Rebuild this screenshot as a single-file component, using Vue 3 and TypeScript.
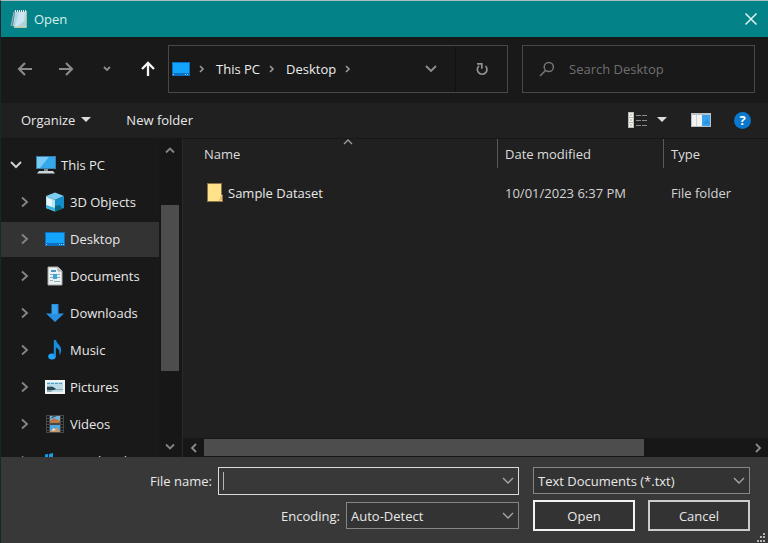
<script setup lang="ts">
import { ref } from 'vue'

interface Place {
  name: string
  icon: string
}

const places: Place[] = [
  { name: '3D Objects', icon: 'cube' },
  { name: 'Desktop', icon: 'desktop' },
  { name: 'Documents', icon: 'document' },
  { name: 'Downloads', icon: 'download' },
  { name: 'Music', icon: 'music' },
  { name: 'Pictures', icon: 'picture' },
  { name: 'Videos', icon: 'video' },
  { name: 'Local Disk (C:)', icon: 'disk' },
]

const files = [{ name: 'Sample Dataset', modified: '10/01/2023 6:37 PM', type: 'File folder' }]

const selected = ref('Desktop')
const fileName = ref('')
const search = ref('')
const fileType = ref('txt')
const encoding = ref('auto')
</script>

<template>
  <main class="dialog">
    <header class="titlebar">
      <svg class="app-icon" width="18" height="20" viewBox="0 0 18 20">
        <path d="M4 2h12v16H5L1 17z" fill="#5e8e98" />
        <path d="M5 3h11l-1 14H3z" fill="#a9d5e6" />
        <path d="M9 3h6l-1 9-6 5H5z" fill="#d8eef5" opacity=".7" />
        <path d="M16 2v16H4" fill="none" stroke="#efe3c4" stroke-width="1.3" />
        <path d="M5 2h11" stroke="#e3eef0" stroke-width="2" stroke-dasharray="1 1" />
        <path d="M4 3 1 17" stroke="#8fb5bc" />
      </svg>
      <h1>Open</h1>
      <button class="close" aria-label="Close">
        <svg width="14" height="14" viewBox="0 0 14 14"><path d="M1.5 1.5l11 11m0-11l-11 11" fill="none" stroke="#e3f1f1" stroke-width="1.5" /></svg>
      </button>
    </header>

    <nav class="navbar">
      <button class="nav-button" aria-label="Back">
        <svg width="16" height="14" viewBox="0 0 16 14"><path d="M15 7H2m6-6L2 7l6 6" fill="none" stroke="#8b8b8b" stroke-width="2.100" /></svg>
      </button>
      <button class="nav-button" aria-label="Forward">
        <svg width="16" height="14" viewBox="0 0 16 14"><path d="M1 7h13M8 1l6 6-6 6" fill="none" stroke="#8b8b8b" stroke-width="2.100" /></svg>
      </button>
      <button class="nav-button" aria-label="Recent locations">
        <svg width="8" height="6" viewBox="0 0 8 6"><path d="M1 1l3 3 3-3" fill="none" stroke="#8b8b8b" stroke-width="1.8" /></svg>
      </button>
      <button class="nav-button" aria-label="Up">
        <svg width="14" height="16" viewBox="0 0 14 16"><path d="M7 15V2M1 8l6-6 6 6" fill="none" stroke="#f4f4f4" stroke-width="2.300" /></svg>
      </button>
      <div class="address">
        <svg width="18" height="14" viewBox="0 0 18 14"><path d="M0 0h18v14H0z" fill="#0d6fc0" /><path d="M1 1h16v10H1z" fill="#13a4fb" /><path d="M1 12.5h2m10 0h4" stroke="#8fd3ff" stroke-dasharray="1 1" /></svg>
        <svg class="sep" width="6" height="8" viewBox="0 0 6 8"><path d="M1 1l3 3-3 3" fill="none" stroke="#9a9a9a" stroke-width="1.6" /></svg>
        <a href="#">This PC</a>
        <svg class="sep" width="6" height="8" viewBox="0 0 6 8"><path d="M1 1l3 3-3 3" fill="none" stroke="#9a9a9a" stroke-width="1.6" /></svg>
        <a href="#">Desktop</a>
        <svg class="sep" width="6" height="8" viewBox="0 0 6 8"><path d="M1 1l3 3-3 3" fill="none" stroke="#9a9a9a" stroke-width="1.6" /></svg>
        <button class="history" aria-label="Previous locations">
          <svg width="12" height="8" viewBox="0 0 12 8"><path d="M1 1l5 5 5-5" fill="none" stroke="#8e8e8e" stroke-width="1.9" /></svg>
        </button>
        <button class="refresh" aria-label="Refresh">
          <svg width="12" height="14" viewBox="0 0 12 14"><path d="M9.500 4A4.800 4.800 0 1 1 3 3.800" fill="none" stroke="#929292" stroke-width="1.7" /><path d="M1 1.800h4.800v5" fill="none" stroke="#929292" stroke-width="1.7" /></svg>
        </button>
      </div>
      <label class="search">
        <svg width="16" height="16" viewBox="0 0 16 16"><circle cx="9.8" cy="6" r="4.6" fill="none" stroke="#757575" stroke-width="1.5" /><path d="M6.5 9.5L1 15" stroke="#757575" stroke-width="1.6" /></svg>
        <input v-model="search" type="search" placeholder="Search Desktop" aria-label="Search Desktop" />
      </label>
    </nav>

    <div class="toolbar">
      <button class="organize">
        Organize
        <svg width="10" height="6" viewBox="0 0 10 6"><path d="M0 0h10L5 5z" fill="#dcdcdc" /></svg>
      </button>
      <button>New folder</button>
      <span class="spacer"></span>
      <button class="view" aria-label="Change your view">
        <svg width="20" height="16" viewBox="0 0 20 16">
          <path d="M0 0h6v16H0z" fill="#b9b9b5" /><path d="M1 1h4v4H1zM1 6h4v4H1zM1 11h4v4H1z" fill="#f1f1ea" />
          <path d="M2 3h2M2 8h2M2 13h2" stroke="#aaa" />
          <path d="M8 3.5h5m1 0h5M8 8.5h5m1 0h5M8 13.5h5m1 0h5" stroke="#8b8b8b" stroke-width="1.2" />
        </svg>
        <svg width="10" height="6" viewBox="0 0 10 6"><path d="M0 0h10L5 5z" fill="#dcdcdc" /></svg>
      </button>
      <button class="preview" aria-label="Show the preview pane">
        <svg width="20" height="16" viewBox="0 0 20 16">
          <path d="M0 1h20v14H0z" fill="#b9c0c4" /><path d="M1 3h10v11H1z" fill="#f1f3f3" /><path d="M5.500 3v11" stroke="#cdd1d2" /><path d="M11 3h8v11h-8z" fill="#38a3ec" /><path d="M12 12l4-5 3 5" fill="#1c82cf" opacity=".5" />
        </svg>
      </button>
      <button class="help" aria-label="Help">?</button>
    </div>

    <div class="content">
      <aside class="sidebar">
        <ul class="tree">
          <li>
            <button class="place root">
              <svg class="twist" width="12" height="8" viewBox="0 0 12 8"><path d="M1 1l5 5 5-5" fill="none" stroke="#cfcfcf" stroke-width="2" /></svg>
              <svg width="20" height="18" viewBox="0 0 20 18">
                <path d="M0 0h20v13H0z" fill="#3c7fa8" /><path d="M1 1h18v11H1z" fill="#33a8ec" /><path d="M1 1h12L4 12H1z" fill="#79cbf5" />
                <path d="M8 13h4v2H8z" fill="#7d8b93" /><path d="M3 15h14l2 2.500H1z" fill="#cbd6dc" />
              </svg>
              This PC
            </button>
          </li>
          <li v-for="place in places" :key="place.name">
            <button class="place" :class="{ selected: place.name === selected }" @click="selected = place.name">
              <svg class="twist" width="8" height="12" viewBox="0 0 8 12"><path d="M1 1.500L6 6l-5 4.500" fill="none" stroke="#858585" stroke-width="1.9" /></svg>
              <svg v-if="place.icon === 'cube'" width="20" height="20" viewBox="0 0 20 20">
                <path d="M1 4l9-3.500L19 4l-9 4z" fill="#78cdf0" /><path d="M1 4l9 4v11.500L1 16z" fill="#b8e3f3" /><path d="M10 8l9-4v12l-9 3.500z" fill="#148dcc" />
                <path d="M2 6l5 2v7l-5-2z" fill="#e6f6fa" /><path d="M1 13l9 3v3.500L1 16z" fill="#3fb2e6" /><path d="M10 14l5-1 2 4-7 2.500z" fill="#0b657c" />
              </svg>
              <svg v-else-if="place.icon === 'desktop'" width="20" height="20" viewBox="0 0 20 20">
                <path d="M0 3h20v14H0z" fill="#0d6fc0" /><path d="M1 4h18v10H1z" fill="#13a4fb" /><path d="M1 15.500h2m11 0h5" stroke="#8fd3ff" stroke-dasharray="1 1" />
              </svg>
              <svg v-else-if="place.icon === 'document'" width="20" height="20" viewBox="0 0 20 20">
                <path d="M3 1h10l4 4v14H3z" fill="#edf1f1" stroke="#a5a9a8" /><path d="M13 1v4h4" fill="#c8cccd" stroke="#9da4a6" />
                <path d="M6 5h5" stroke="#4d96bd" stroke-width="2" /><path d="M5 8.500h3m2 0h5M5 11.500h3m4 0h3M5 14.500h3m1 1h6" stroke="#8eabb8" /><path d="M8 8h4v5H8z" fill="#39a6dc" />
              </svg>
              <svg v-else-if="place.icon === 'download'" width="20" height="20" viewBox="0 0 20 20">
                <path d="M6.500 1h7v9.500H19L10 19l-9-8.500h5.500z" fill="#278fe1" /><path d="M7 2h5v9H7z" fill="#3ba0ec" />
              </svg>
              <svg v-else-if="place.icon === 'music'" width="20" height="20" viewBox="0 0 20 20">
                <ellipse cx="7" cy="16.500" rx="3.800" ry="3" fill="#20a5f6" /><path d="M8.800 0h2.300c.3 4 5.500 5 5 11-.2 2-1 3-2 4 1-4 0-6-3.200-7.500v9H8.800z" fill="#168ee0" />
              </svg>
              <svg v-else-if="place.icon === 'picture'" width="20" height="20" viewBox="0 0 20 20">
                <path d="M0 3h20v14H0z" fill="#f2f4f4" /><path d="M2 5h16v10H2z" fill="#b9ddeb" /><path d="M2 6.500h15" stroke="#4e9fc8" stroke-dasharray="3 1" /><path d="M2 9h5l4 3h7v3H2z" fill="#8aa9b2" /><path d="M2 10h6l3 2-2 1H2z" fill="#294954" /><path d="M8 13h10v2H6z" fill="#c4dfe5" />
              </svg>
              <svg v-else-if="place.icon === 'video'" width="20" height="20" viewBox="0 0 20 20">
                <path d="M1 1h18v18H1z" fill="#484848" /><path d="M3 2v16M17 2v16" stroke="#171717" stroke-width="2" stroke-dasharray="2 1" />
                <path d="M5 2h10v7H5z" fill="#72b4de" /><path d="M5 11h10v7H5z" fill="#49a8e2" /><path d="M5 7l4-3 6 3v2H5z" fill="#b97646" /><path d="M5 17l4-2 3-2 3 5H5z" fill="#c7956c" /><path d="M5 5l3-3h4" fill="#3c5260" /><path d="M8 14l3 2-4 1" fill="#f1e1ca" />
              </svg>
              <svg v-else width="20" height="20" viewBox="0 0 20 20">
                <path d="M0 13h20v5H0z" fill="#b9c1c5" /><path d="M0 3.500l3-.5v4H0zM4 3l4-1v5H4z" fill="#159de8" />
              </svg>
              {{ place.name }}
            </button>
          </li>
        </ul>
        <div class="vscroll">
          <button aria-label="Scroll up"><svg width="10" height="8" viewBox="0 0 10 8"><path d="M1 6.500l4-4 4 4" fill="none" stroke="#858585" stroke-width="1.8" /></svg></button>
          <div class="vtrack"><div class="vthumb"></div></div>
          <button aria-label="Scroll down"><svg width="10" height="8" viewBox="0 0 10 8"><path d="M1 1.500l4 4 4-4" fill="none" stroke="#858585" stroke-width="1.8" /></svg></button>
        </div>
      </aside>

      <section class="listing">
        <table>
          <colgroup><col /><col class="date-col" /><col class="type-col" /></colgroup>
          <thead>
            <tr>
              <th scope="col" aria-sort="ascending">
                Name
                <svg class="sort" width="10" height="6" viewBox="0 0 10 6"><path d="M1 5l4-4 4 4" fill="none" stroke="#9a9a9a" stroke-width="1.4" /></svg>
              </th>
              <th scope="col">Date modified</th>
              <th scope="col">Type</th>
            </tr>
          </thead>
          <tbody>
            <tr v-for="file in files" :key="file.name">
              <td>
                <span class="file">
                  <svg width="16" height="20" viewBox="0 0 16 20"><path d="M0 0h15v11l1 1v7H0z" fill="#8d7347" /><path d="M1 1h13v11h1v6H1z" fill="#ffe28a" /><path d="M12 17h1m1-4v4" stroke="#c39f56" /><path d="M3 5h1" stroke="#fffbe8" /></svg>
                  {{ file.name }}
                </span>
              </td>
              <td>{{ file.modified }}</td>
              <td>{{ file.type }}</td>
            </tr>
          </tbody>
        </table>
        <div class="hscroll">
          <button aria-label="Scroll left"><svg width="8" height="10" viewBox="0 0 8 10"><path d="M6 1L2 5l4 4" fill="none" stroke="#8b8b8b" stroke-width="1.8" /></svg></button>
          <div class="htrack"><div class="hthumb"></div></div>
          <button aria-label="Scroll right"><svg width="8" height="10" viewBox="0 0 8 10"><path d="M2 1l4 4-4 4" fill="none" stroke="#8b8b8b" stroke-width="1.8" /></svg></button>
        </div>
      </section>
    </div>

    <form class="footer" @submit.prevent>
      <div class="fields">
        <div class="field">
          <label for="file-name">File name:</label>
          <div class="combo name-combo">
            <span class="caret"></span>
            <input id="file-name" v-model="fileName" type="text" autocomplete="off" />
            <svg class="drop" width="12" height="8" viewBox="0 0 12 8"><path d="M1 1l5 5 5-5" fill="none" stroke="#a5a5a5" stroke-width="1.4" /></svg>
          </div>
        </div>
        <div class="field">
          <label for="encoding">Encoding:</label>
          <div class="combo encoding-combo">
            <select id="encoding" v-model="encoding">
              <option value="auto">Auto-Detect</option>
            </select>
            <svg class="drop" width="12" height="8" viewBox="0 0 12 8"><path d="M1 1l5 5 5-5" fill="none" stroke="#a5a5a5" stroke-width="1.4" /></svg>
          </div>
        </div>
      </div>
      <div class="actions">
        <div class="combo">
          <select v-model="fileType" aria-label="File type">
            <option value="txt">Text Documents (*.txt)</option>
          </select>
          <svg class="drop" width="12" height="8" viewBox="0 0 12 8"><path d="M1 1l5 5 5-5" fill="none" stroke="#a5a5a5" stroke-width="1.4" /></svg>
        </div>
        <div class="buttons">
          <button class="primary" type="submit">Open</button>
          <button type="button">Cancel</button>
        </div>
      </div>
      <svg class="grip" width="12" height="10" viewBox="0 0 12 10"><path d="M7 0h2v2H7zM4 3h2v2H4zM7 3h2v2H7zM1 7h2v2H1zM4 7h2v2H4zM7 7h2v2H7z" fill="#b4b4b4" /></svg>
    </form>
  </main>
</template>

<style>
body {
  margin: 0;
  background: #191919;
}
</style>

<style scoped>
* {
  box-sizing: border-box;
}
.dialog {
  display: flex;
  flex-direction: column;
  height: 100vh;
  overflow: hidden;
  border-top: 1px solid #a9bcbc;
  border-left: 1px solid #12292d;
  background: #191919;
  color: #e8e8e8;
  font: 13px/20px "Open Sans", "Noto Sans", sans-serif;
}
button,
input,
select {
  margin: 0;
  padding: 0;
  border: 0;
  border-radius: 0;
  background: none;
  color: inherit;
  font: inherit;
  outline: none;
}
button {
  display: flex;
  align-items: center;
  justify-content: center;
}
svg {
  flex: none;
  display: block;
}
.titlebar {
  display: flex;
  flex: none;
  align-items: center;
  height: 36px;
  padding-left: 9px;
  background: #038387;
}
h1 {
  flex: 1;
  margin: 0 0 0 6px;
  color: #d9eeee;
  font-size: 13px;
  font-weight: 400;
}
.close {
  width: 34px;
  height: 36px;
}
.navbar {
  display: flex;
  flex: none;
  align-items: center;
  height: 66px;
  padding: 0 13px 2px 3px;
}
.nav-button {
  width: 41px;
  height: 40px;
}
.address {
  display: flex;
  flex: 1;
  align-items: center;
  height: 48px;
  padding-left: 3px;
  border: 1px solid #484848;
}
.address a {
  color: #ededed;
  text-decoration: none;
}
.sep {
  margin: 0 11px 0 9px;
}
.history {
  width: 48px;
  height: 46px;
  margin-left: auto;
}
.refresh {
  width: 52px;
  height: 46px;
  border-left: 1px solid #121212;
}
.search {
  display: flex;
  align-items: center;
  gap: 14px;
  width: 233px;
  height: 48px;
  margin-left: 14px;
  padding: 0 16px;
  border: 1px solid #484848;
}
.search input {
  flex: 1;
  min-width: 0;
}
.search input::placeholder {
  color: #6f6f6f;
  opacity: 1;
}
.toolbar {
  display: flex;
  flex: none;
  align-items: center;
  height: 36px;
  padding: 0 17px 1px 20px;
  border-bottom: 1px solid #161616;
  background: #202020;
}
.organize {
  gap: 6px;
  margin-right: 35px;
}
.spacer {
  flex: 1;
}
.view {
  gap: 9px;
}
.preview {
  margin: 0 23px 0 24px;
}
.help {
  width: 17px;
  height: 17px;
  border-radius: 50%;
  background: #0a78cd;
  color: #fff;
  font-weight: 700;
}
.content {
  display: flex;
  flex: 1;
  min-height: 0;
}
.sidebar {
  display: flex;
  flex: none;
  width: 182px;
  border-right: 1px solid #292929;
}
.tree {
  flex: 1;
  margin: 0;
  padding: 8px 0 0;
  overflow: hidden;
  list-style: none;
}
.tree li {
  height: 37px;
  padding: 1px 0;
}
.place {
  justify-content: flex-start;
  gap: 5px;
  width: 100%;
  height: 35px;
  padding: 0 0 1px 20px;
  white-space: nowrap;
}
.place .twist {
  margin-right: 11px;
}
.place.root {
  padding-left: 9px;
}
.place.root .twist {
  margin-right: 9px;
}
.place.selected {
  background: #333;
}
.vscroll {
  display: flex;
  flex: none;
  flex-direction: column;
  width: 23px;
  padding: 0 3px 0 2px;
  background: #171717;
}
.vscroll button {
  flex: none;
  height: 21px;
}
.vtrack {
  flex: 1;
  min-height: 0;
  padding-top: 45px;
}
.vthumb {
  height: 72%;
  background: #4d4d4d;
}
.listing {
  display: flex;
  flex: 1;
  flex-direction: column;
  justify-content: space-between;
  min-width: 0;
  background: #202020;
}
table {
  width: 100%;
  border-spacing: 0;
  table-layout: fixed;
}
.date-col {
  width: 166px;
}
.type-col {
  width: 105px;
}
th {
  position: relative;
  height: 29px;
  padding: 0 0 0 7px;
  border-left: 1px solid #5a5a5a;
  color: #dcdcdc;
  font-weight: 400;
  text-align: left;
}
th:first-child {
  padding-left: 21px;
  border-left: 0;
}
.sort {
  position: absolute;
  top: 0;
  left: 51%;
}
td {
  height: 49px;
  padding: 0 0 0 8px;
  color: #d4d4d4;
}
td:first-child {
  padding-left: 24px;
  color: #e8e8e8;
}
.file {
  display: flex;
  align-items: center;
  gap: 5px;
}
.hscroll {
  display: flex;
  height: 19px;
  padding: 1px 0;
  background: #171717;
}
.hscroll button {
  flex: none;
  width: 21px;
}
.htrack {
  flex: 1;
}
.hthumb {
  width: 81%;
  height: 100%;
  background: #4d4d4d;
}
.footer {
  display: flex;
  position: relative;
  flex: none;
  gap: 14px;
  padding: 10px 18px 12px 0;
  background: #383838;
}
.fields {
  display: flex;
  flex: 1;
  flex-direction: column;
  gap: 7px;
}
.field {
  display: flex;
  align-items: center;
  justify-content: flex-end;
  gap: 6px;
}
.combo {
  display: flex;
  position: relative;
  align-items: center;
  height: 27px;
  border: 1px solid #858585;
  background: #333;
}
.name-combo {
  width: 301px;
  height: 28px;
  border-color: #dadada;
  background: #383838;
}
.encoding-combo {
  width: 173px;
}
.caret {
  width: 1px;
  height: 18px;
  margin-left: 4px;
  background: #b5b5b5;
}
.combo input {
  flex: 1;
  min-width: 0;
  padding: 0 24px 0 2px;
}
.combo select {
  width: 100%;
  height: 100%;
  padding: 0 20px 0 4px;
  appearance: none;
}
.drop {
  position: absolute;
  right: 4px;
  pointer-events: none;
}
.actions {
  display: flex;
  flex: none;
  flex-direction: column;
  gap: 6px;
  width: 217px;
}
.buttons {
  display: flex;
  gap: 13px;
}
.buttons button {
  flex: 1;
  height: 31px;
  border: 2px solid #ccc;
  background: #333;
}
.buttons .primary {
  border-color: #f2f2f2;
}
.grip {
  position: absolute;
  right: 0;
  bottom: 0;
}
</style>
